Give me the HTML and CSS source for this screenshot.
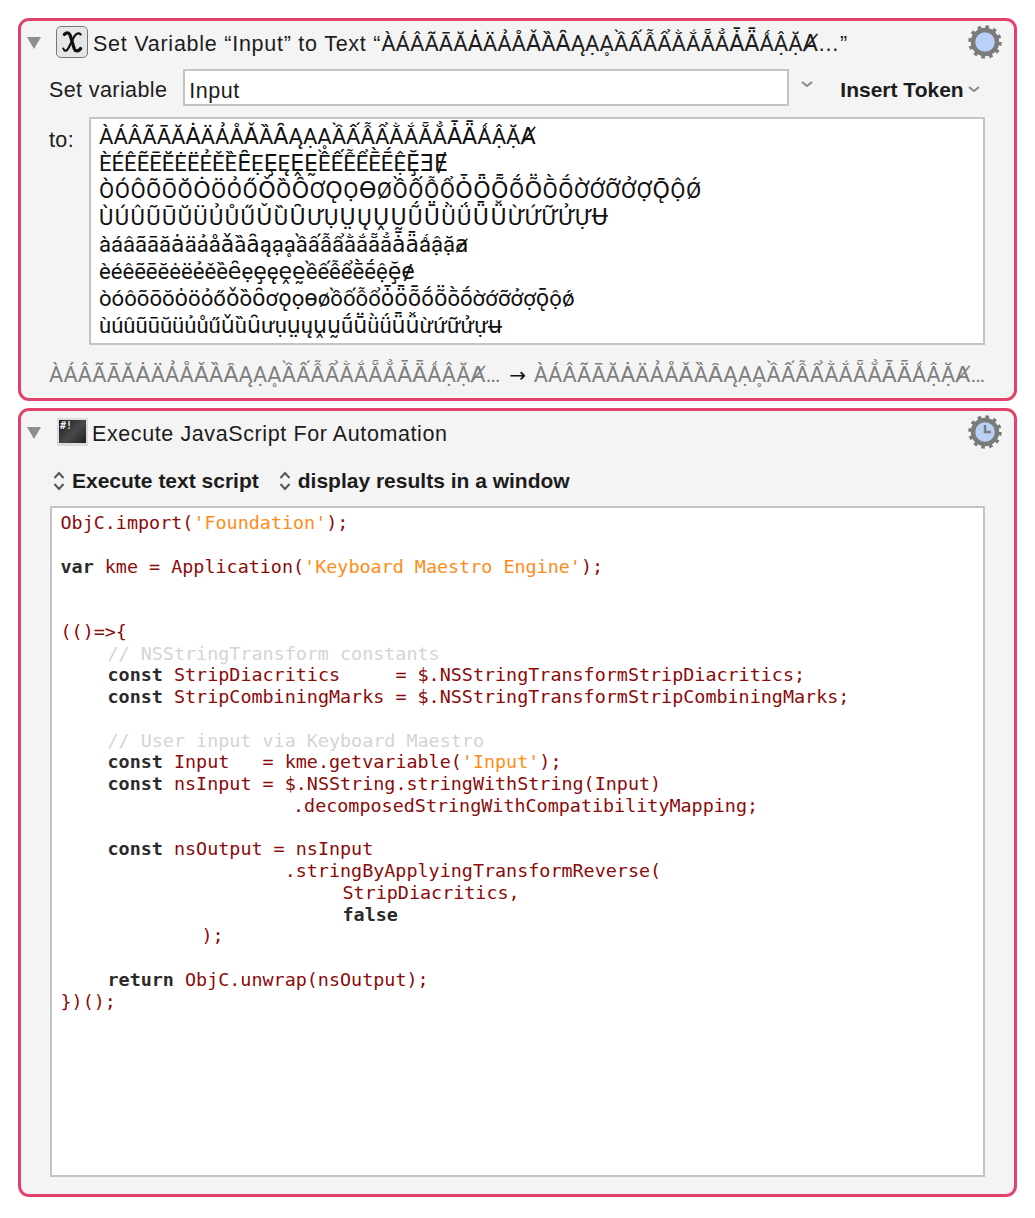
FILE: index.html
```html
<!DOCTYPE html>
<html lang="en">
<head>
<meta charset="utf-8">
<title>Keyboard Maestro actions</title>
<link rel="stylesheet" href="styles.css">
</head>
<body>
<section class="card card-set">
  <header class="head">
    <svg class="tri" viewBox="0 0 14 12"><path d="M0 0H14L7 12Z"/></svg>
    <span class="xbtn"><svg viewBox="0 0 24 24"><path class="xs" d="M5 5C8 2 10 4 11 8L14 18C15 21 18 21 20 18"/><path class="xt" d="M20 5C18 3 16 4 14 7L9 17C7 21 5 21 4 18"/></svg></span>
    <h2 class="title title-set">Set Variable “Input” to Text “<span class="acc">ÀÁÂÃĀĂȦÄẢÅǍȀȂĄẠḀẦẤẪẨẰẮẴẲǠǞǺẬẶȺ</span>…”</h2>
    <svg class="gear" viewBox="0 0 36 36"><circle class="teeth" cx="18" cy="18" r="15"/><circle class="rim" cx="18" cy="18" r="12"/></svg>
  </header>
  <div class="field-row">
    <label class="lab">Set variable</label>
    <div class="input">Input</div>
    <svg class="chev chev-a" viewBox="0 0 12 8"><path d="M1 1L6 5L11 1"/></svg>
    <span class="token">Insert Token</span>
    <svg class="chev chev-b" viewBox="0 0 12 8"><path d="M1 1L6 5L11 1"/></svg>
  </div>
  <div class="to-row">
    <label class="lab to">to:</label>
    <div class="area">ÀÁÂÃĀĂȦÄẢÅǍȀȂĄẠḀẦẤẪẨẰẮẴẲǠǞǺẬẶȺ
ÈÉÊẼĒĔĖËẺĚȄȆẸȨĘḘḚỀẾỄỂḔḖỆḜƎɆ
<span class="wide-o">ÒÓÔÕŌŎȮÖỎŐǑȌȎƠǪỌƟØỒỐỖỔȰȪȬṌṎṐṒỜỚỠỞỢǬỘǾ</span>
<span class="wide-u">ÙÚÛŨŪŬÜỦŮŰǓȔȖƯỤṲŲṶṴṸṺǛǗǕǙỪỨỮỬỰɄ</span>
àáâãāăȧäảåǎȁȃąạḁầấẫẩằắẵẳǡǟǻậặⱥ
èéêẽēĕėëẻěȅȇẹȩęḙḛềếễểḕḗệḝɇ
òóôõōŏȯöỏőǒȍȏơǫọɵøồốỗổȱȫȭṍṏṑṓờớỡởợǭộǿ
ùúûũūŭüủůűǔȕȗưụṳųṷṵṹṻǜǘǖǚừứữửựʉ</div>
  </div>
  <p class="preview">ÀÁÂÃĀĂȦÄẢÅǍȀȂĄẠḀẦẤẪẨẰẮẴẲǠǞǺẬẶȺ… <span class="arrow">→</span> ÀÁÂÃĀĂȦÄẢÅǍȀȂĄẠḀẦẤẪẨẰẮẴẲǠǞǺẬẶȺ…</p>
</section>
<section class="card card-js">
  <header class="head">
    <svg class="tri" viewBox="0 0 14 12"><path d="M0 0H14L7 12Z"/></svg>
    <span class="term"><span class="shebang">#!</span></span>
    <h2 class="title">Execute JavaScript For Automation</h2>
    <svg class="gear" viewBox="0 0 36 36"><circle class="teeth" cx="18" cy="18" r="15"/><circle class="rim" cx="18" cy="18" r="12"/><path class="hands" d="M18 11V18H24"/></svg>
  </header>
  <div class="pop-row">
    <svg class="updown" viewBox="0 0 12 22"><path d="M1.5 8L6 3L10.500 8M1.500 14L6 19L10.500 14"/></svg>
    <span class="pop">Execute text script</span>
    <svg class="updown updown-b" viewBox="0 0 12 22"><path d="M1.5 8L6 3L10.500 8M1.500 14L6 19L10.500 14"/></svg>
    <span class="pop">display results in a window</span>
  </div>
  <pre class="code">ObjC.import(<span class="s">'Foundation'</span>);

<b>var</b> kme = Application(<span class="s">'Keyboard Maestro Engine'</span>);


(()=&gt;{
	<span class="c">// NSStringTransform constants</span>
	<b>const</b> StripDiacritics     = $.NSStringTransformStripDiacritics;
	<b>const</b> StripCombiningMarks = $.NSStringTransformStripCombiningMarks;

	<span class="c">// User input via Keyboard Maestro</span>
	<b>const</b> Input   = kme.getvariable(<span class="s">'Input'</span>);
	<b>const</b> nsInput = $.NSString.stringWithString(Input)
                     .decomposedStringWithCompatibilityMapping;

	<b>const</b> nsOutput = nsInput
	                .stringByApplyingTransformReverse(
						StripDiacritics,
						<b>false</b>
			);

	<b>return</b> ObjC.unwrap(nsOutput);
})();</pre>
</section>
</body>
</html>
```
FILE: styles.css
```css
* { box-sizing: border-box; }
html, body { margin: 0; background: #fff; }
body {
  padding: 18px 18px 22px;
  width: 1035px;
  height: 1218px;
  overflow: hidden;
  font-family: "Liberation Sans", "DejaVu Sans", sans-serif;
  font-size: 21.5px;
  color: #1c1c1c;
}
.card {
  background: #f4f4f4;
  border: 3px solid #e3416a;
  border-radius: 11px;
  width: 999px;
  padding: 0 29px 0 6px;
}
.card-set { height: 383px; margin-bottom: 7px; }
.card-js { height: 789px; }
.head {
  display: flex;
  align-items: center;
  height: 40px;
  margin-top: 1px;
}
.tri { width: 14px; height: 12px; margin-top: 2px; flex: none; }
.tri path { fill: #8f8f8f; }
.xbtn {
  flex: none;
  width: 32px;
  height: 32px;
  margin-left: 15px;
  margin-right: 1px;
  border: 1px solid #777;
  border-radius: 5px;
  background: #e6e6e6;
  display: flex;
  align-items: center;
  justify-content: center;
}
.xbtn svg { width: 26px; height: 26px; }
.xs, .xt { fill: none; stroke: #111; stroke-linecap: round; }
.xs { stroke-width: 3; }
.xt { stroke-width: 2; }
.term {
  flex: none;
  width: 31px;
  height: 28px;
  margin-left: 16px;
  border: 2px solid #dcdcdc;
  border-bottom-width: 3px;
  background: linear-gradient(135deg, #1b1b1b, #4a4a4a 55%, #202020);
  display: block;
  overflow: hidden;
}
.shebang {
  display: block;
  color: #eee;
  font: bold 10px/12px "DejaVu Sans Mono", monospace;
  padding-left: 1px;
}
.title {
  margin: 4px 0 0 4px;
  font-size: inherit;
  font-weight: 400;
  line-height: 24px;
  white-space: nowrap;
  flex: 1;
  min-width: 0;
  letter-spacing: 0.6px;
}
.title-set { letter-spacing: 0.75px; }
.acc, .area, .preview {
  font-family: Roboto, "DejaVu Sans", sans-serif;
}
.acc { font-size: 22.1px; letter-spacing: 0; line-height: 1; }
.gear { width: 36px; height: 36px; flex: none; margin-right: -18px; margin-top: -1px; }
.teeth { fill: none; stroke: #7b7b7b; stroke-width: 3.5; stroke-dasharray: 3.6 4.25; }
.rim { fill: #b9d1f6; stroke: #7b7b7b; stroke-width: 4.5; }
.hands { fill: none; stroke: #7b7b7b; stroke-width: 2.4; }
.field-row {
  display: flex;
  align-items: center;
  margin-top: 7px;
  padding-left: 22px;
}
.lab { flex: none; letter-spacing: 0.4px; margin-top: 6px; }
.input {
  flex: none;
  width: 606px;
  height: 37px;
  margin-left: 16px;
  padding: 4px 4px 0;
  background: #fff;
  border: 2px solid #c4c4c4;
  line-height: 33px;
  letter-spacing: 0.5px;
}
.chev { width: 12px; height: 8px; flex: none; }
.chev path { fill: none; stroke: #888; stroke-width: 2; }
.chev-a { margin-left: 12px; margin-top: -6px; }
.chev-b { margin-top: 5px; }
.token { font-weight: 700; font-size: 21px; margin: 5px 4px 0 27px; }
.to-row {
  display: flex;
  margin-top: 11px;
  padding-left: 22px;
}
.to { margin-top: 11px; width: 40px; }
.area {
  width: 896px;
  height: 228px;
  padding: 4px 8px;
  background: #fff;
  border: 2px solid #c4c4c4;
  white-space: pre;
  font-size: 22.1px;
  line-height: 27px;
  color: #111;
  overflow: hidden;
}
.wide-o { letter-spacing: 0.5px; }
.wide-u { letter-spacing: 1.4px; }
.preview {
  margin: 16px 0 0 22px;
  color: #7e7e7e;
  white-space: nowrap;
  font-size: 21.8px;
  line-height: 28px;
  letter-spacing: 0.2px;
}
.arrow {
  color: #111;
  font-family: "DejaVu Sans", sans-serif;
  font-size: 20px;
  margin: 0 2px 0 3px;
}
.pop-row {
  display: flex;
  align-items: center;
  margin-top: 17px;
  padding-left: 25px;
}
.updown { width: 14px; height: 22px; flex: none; }
.updown path { fill: none; stroke: #555; stroke-width: 2; }
.updown-b { margin-left: 19px; }
.pop { font-weight: 700; font-size: 21px; margin-left: 6px; }
.code {
  width: 935px;
  height: 671px;
  margin: 13px 0 0 23px;
  padding: 4px 8.5px;
  background: #fff;
  border: 2px solid #c4c4c4;
  font-family: "DejaVu Sans Mono", monospace;
  font-size: 18.4px;
  line-height: 21.75px;
  tab-size: 47px;
  color: #8b0a0a;
  overflow: hidden;
}
.code b { color: #2b2b2b; font-weight: 700; }
.s { color: #ff8c1a; }
.c { color: #d4d4d4; }
```
